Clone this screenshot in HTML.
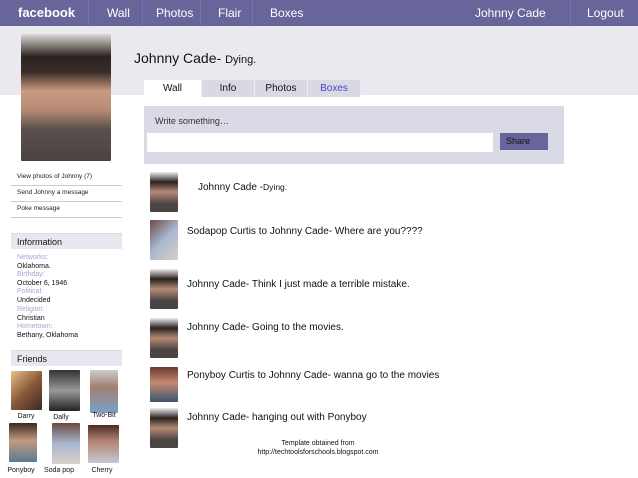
<!DOCTYPE html>
<html><head><style>
*{margin:0;padding:0;box-sizing:border-box}
body{width:638px;height:478px;position:relative;background:#fff;font-family:"Liberation Sans",sans-serif;overflow:hidden;color:#111}
.a{position:absolute;white-space:nowrap}
.hd{left:0;top:0;width:638px;height:26px;background:#67659a}
.hd span{position:absolute;top:6px;color:#fff;font-size:12px}
.sep{position:absolute;top:0;width:1px;height:26px;background:#7472a6}
.band{left:0;top:26px;width:638px;height:69px;background:#e9e9ef}
.tab{position:absolute;top:80px;height:17px;background:#d9d9e4;font-size:10px;text-align:center;line-height:17px;border-right:1px solid #eee}
.ph{position:absolute;border-radius:1px}
.lk{position:absolute;left:17px;font-size:6.5px;color:#222}
.ln{position:absolute;left:11px;width:111px;height:1px;background:#ccc}
.sh{position:absolute;left:11px;width:111px;height:16px;background:#e7e7ef;font-size:9px;padding-left:6px;line-height:16px;border-top:1px solid #ddd}
.lb{position:absolute;left:17px;font-size:7px;color:#a3a8cc}
.vl{position:absolute;left:17px;font-size:7px;color:#111}
.fn{position:absolute;font-size:7px;text-align:center;width:40px}
.pt{position:absolute;font-size:10px}
</style></head><body>
<div class="a hd">
<span style="left:18px;font-weight:bold;font-size:13px;top:5px">facebook</span>
<span style="left:107px">Wall</span><span style="left:156px">Photos</span><span style="left:218px">Flair</span><span style="left:270px">Boxes</span>
<span style="left:475px">Johnny Cade</span><span style="left:587px">Logout</span>
<div class="sep" style="left:88px"></div><div class="sep" style="left:142px"></div><div class="sep" style="left:200px"></div><div class="sep" style="left:252px"></div><div class="sep" style="left:570px"></div>
</div>
<div class="a band"></div>
<div class="ph" style="left:21px;top:34px;width:90px;height:127px;background:linear-gradient(180deg,#ddd9d6 0%,#2a2320 18%,#3a2d28 30%,#c99a80 45%,#b58a74 60%,#5b4f4c 75%,#4a4444 100%)"></div>
<div class="a" style="left:134px;top:50px;font-size:14px">Johnny Cade- <span style="font-size:11px">Dying.</span></div>
<div class="tab" style="left:144px;width:58px;background:#fff">Wall</div>
<div class="tab" style="left:202px;width:53px">Info</div>
<div class="tab" style="left:255px;width:53px">Photos</div>
<div class="tab" style="left:308px;width:53px;color:#4b48c0">Boxes</div>
<div class="a" style="left:144px;top:106px;width:420px;height:58px;background:#d9dae6"></div>
<div class="a" style="left:155px;top:116px;font-size:9px;color:#333">Write something…</div>
<div class="a" style="left:147px;top:133px;width:346px;height:19px;background:#fff"></div>
<div class="a" style="left:500px;top:133px;width:48px;height:17px;background:#67659a;font-size:9px;line-height:17px;padding-left:6px;color:#111">Share</div>

<div class="ph" style="left:150px;top:172px;width:28px;height:40px;background:linear-gradient(180deg,#eee 0%,#2a2320 25%,#b58a74 50%,#4a4444 80%)"></div>
<div class="pt" style="left:198px;top:182px">Johnny Cade -<span style="font-size:8.5px">Dying.</span></div>
<div class="ph" style="left:150px;top:220px;width:28px;height:40px;background:linear-gradient(135deg,#6a4a40,#a9b7d0 50%,#d8cfc8)"></div>
<div class="pt" style="left:187px;top:226px">Sodapop Curtis to Johnny Cade- Where are you????</div>
<div class="ph" style="left:150px;top:269px;width:28px;height:40px;background:linear-gradient(180deg,#eee 0%,#2a2320 25%,#b58a74 50%,#4a4444 80%)"></div>
<div class="pt" style="left:187px;top:279px">Johnny Cade- Think I just made a terrible mistake.</div>
<div class="ph" style="left:150px;top:318px;width:28px;height:40px;background:linear-gradient(180deg,#eee 0%,#2a2320 25%,#b58a74 50%,#4a4444 80%)"></div>
<div class="pt" style="left:187px;top:322px">Johnny Cade- Going to the movies.</div>
<div class="ph" style="left:150px;top:367px;width:28px;height:35px;background:linear-gradient(180deg,#6a3a30,#c48a70 45%,#3a5570)"></div>
<div class="pt" style="left:187px;top:370px">Ponyboy Curtis to Johnny Cade- wanna go to the movies</div>
<div class="ph" style="left:150px;top:408px;width:28px;height:40px;background:linear-gradient(180deg,#eee 0%,#2a2320 25%,#b58a74 50%,#4a4444 80%)"></div>
<div class="pt" style="left:187px;top:412px">Johnny Cade- hanging out with Ponyboy</div>
<div class="a" style="left:218px;top:439px;width:200px;text-align:center;font-size:7px;line-height:9px">Template obtained from<br>http://techtoolsforschools.blogspot.com</div>

<div class="lk" style="top:173px">View photos of Johnny (7)</div><div class="ln" style="top:185px"></div>
<div class="lk" style="top:189px">Send Johnny a message</div><div class="ln" style="top:201px"></div>
<div class="lk" style="top:205px">Poke message</div><div class="ln" style="top:217px"></div>
<div class="sh" style="top:233px">Information</div>
<div class="lb" style="top:254px">Networks:</div><div class="vl" style="top:263px">Oklahoma.</div>
<div class="lb" style="top:271px">Birthday:</div><div class="vl" style="top:280px">October 6, 1946</div>
<div class="lb" style="top:288px">Political:</div><div class="vl" style="top:297px">Undecided</div>
<div class="lb" style="top:306px">Religion:</div><div class="vl" style="top:315px">Christian</div>
<div class="lb" style="top:323px">Hometown:</div><div class="vl" style="top:332px">Bethany, Oklahoma</div>
<div class="sh" style="top:350px">Friends</div>
<div class="ph" style="left:11px;top:371px;width:31px;height:39px;background:linear-gradient(135deg,#e8c08a,#8a5a3a 50%,#3a2a22)"></div>
<div class="ph" style="left:49px;top:370px;width:31px;height:41px;background:linear-gradient(180deg,#333,#999 50%,#222)"></div>
<div class="ph" style="left:90px;top:370px;width:28px;height:43px;background:linear-gradient(180deg,#ccc,#a08070 40%,#7aa0c8)"></div>
<div class="ph" style="left:9px;top:423px;width:28px;height:39px;background:linear-gradient(180deg,#3a2a22,#c49a80 45%,#5a7a90)"></div>
<div class="ph" style="left:52px;top:423px;width:28px;height:41px;background:linear-gradient(180deg,#6a4a40,#a9b7d0 50%,#d8cfc8)"></div>
<div class="ph" style="left:88px;top:425px;width:31px;height:38px;background:linear-gradient(180deg,#4a2a22,#b08070 40%,#c8c8d0)"></div>
<div class="fn" style="left:6px;top:413px">Darry</div>
<div class="fn" style="left:41px;top:414px">Dally</div>
<div class="fn" style="left:84px;top:412px">Two-Bit</div>
<div class="fn" style="left:1px;top:467px">Ponyboy</div>
<div class="fn" style="left:39px;top:467px">Soda pop</div>
<div class="fn" style="left:82px;top:467px">Cherry</div>
</body></html>
